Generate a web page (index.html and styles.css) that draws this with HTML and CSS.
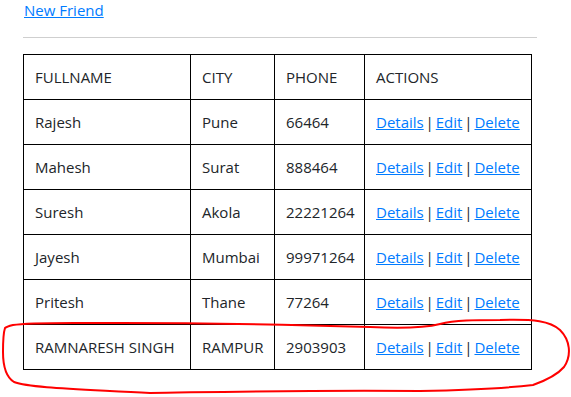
FILE: index.html
```html
<!DOCTYPE html>
<html>
<head>
<meta charset="utf-8">
<link rel="stylesheet" href="styles.css">
</head>
<body>
<div class="page">
  <div class="nav"><a href="#">New Friend</a></div>
  <hr class="rule">
  <table class="friends">
    <colgroup>
      <col class="c1"><col class="c2"><col class="c3"><col class="c4">
    </colgroup>
    <thead>
      <tr><th>FULLNAME</th><th>CITY</th><th>PHONE</th><th>ACTIONS</th></tr>
    </thead>
    <tbody>
      <tr><td>Rajesh</td><td>Pune</td><td>66464</td><td class="actions"><a href="#">Details</a> | <a href="#">Edit</a> | <a href="#">Delete</a></td></tr>
      <tr><td>Mahesh</td><td>Surat</td><td>888464</td><td class="actions"><a href="#">Details</a> | <a href="#">Edit</a> | <a href="#">Delete</a></td></tr>
      <tr><td>Suresh</td><td>Akola</td><td>22221264</td><td class="actions"><a href="#">Details</a> | <a href="#">Edit</a> | <a href="#">Delete</a></td></tr>
      <tr><td>Jayesh</td><td>Mumbai</td><td>99971264</td><td class="actions"><a href="#">Details</a> | <a href="#">Edit</a> | <a href="#">Delete</a></td></tr>
      <tr><td>Pritesh</td><td>Thane</td><td>77264</td><td class="actions"><a href="#">Details</a> | <a href="#">Edit</a> | <a href="#">Delete</a></td></tr>
      <tr><td>RAMNARESH SINGH</td><td>RAMPUR</td><td>2903903</td><td class="actions"><a href="#">Details</a> | <a href="#">Edit</a> | <a href="#">Delete</a></td></tr>
    </tbody>
  </table>
</div>
<svg class="scribble" width="571" height="397" viewBox="0 0 571 397">
  <path d="M5,328 C3,334 3,342 3,352 C3,366 6,377 14,382 C30,388 80,389 150,393 C220,392 300,390 420,391 C470,390 500,389 533,385 C547,380 558,374 564,367 C572,355 570,340 560,330 C550,321 535,319 500,320 C475,320 455,320 440,324 C420,329 390,328 370,327 C300,325 200,323 120,323 C60,323 30,322 13,325 C9,326 6,327 5,328 Z" fill="none" stroke="#f00" stroke-width="2"/>
</svg>
</body>
</html>
```

FILE: styles.css
```css
html, body {
  margin: 0;
  padding: 0;
  background: #fff;
}
body {
  font-family: "Open Sans", "Noto Sans", sans-serif;
  font-size: 15px;
  color: #212529;
  position: relative;
  width: 571px;
  height: 397px;
  overflow: hidden;
}
a {
  color: #007bff;
  text-decoration: underline;
}
.page {
  padding: 0 34px 0 23px;
}
.nav {
  height: 22px;
  line-height: 20px;
  font-size: 15px;
  padding-left: 1px;
}
.rule {
  margin: 15px 0 0 0;
  border: 0;
  border-top: 1px solid #cfcfcf;
  height: 0;
}
.friends {
  margin-top: 16px;
  width: 508px;
  border-collapse: collapse;
  border: 1px solid #000;
  table-layout: fixed;
}
.c1 { width: 167px; }
.c2 { width: 84px; }
.c3 { width: 90px; }
.c4 { width: 167px; }
.friends th,
.friends td {
  border: 1px solid #000;
  height: 45px;
  padding: 0 11px;
  text-align: left;
  font-weight: normal;
  vertical-align: middle;
  white-space: nowrap;
  box-sizing: border-box;
}
.friends .actions {
  word-spacing: -2px;
}
.scribble {
  position: absolute;
  left: 0;
  top: 0;
  pointer-events: none;
}
```
